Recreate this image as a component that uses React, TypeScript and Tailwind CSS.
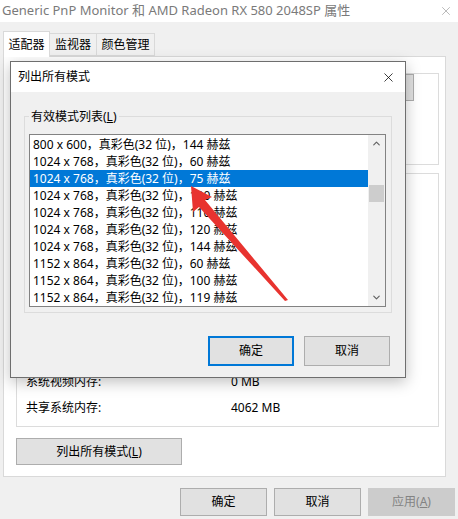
import { ChevronUp, ChevronDown, X } from "lucide-react";

const modes = [
  "800 x 600，真彩色(32 位)，144 赫兹",
  "1024 x 768，真彩色(32 位)，60 赫兹",
  "1024 x 768，真彩色(32 位)，75 赫兹",
  "1024 x 768，真彩色(32 位)，100 赫兹",
  "1024 x 768，真彩色(32 位)，110 赫兹",
  "1024 x 768，真彩色(32 位)，120 赫兹",
  "1024 x 768，真彩色(32 位)，144 赫兹",
  "1152 x 864，真彩色(32 位)，60 赫兹",
  "1152 x 864，真彩色(32 位)，100 赫兹",
  "1152 x 864，真彩色(32 位)，119 赫兹",
];

// only the rows that show below the dialog
const infoRows = [
  ["系统视频内存:", "0 MB"],
  ["共享系统内存:", "4062 MB"],
];

const ModeList = () => {
  return (
    <div className="flex h-[173px] w-[357px] border border-[#828282] bg-white">
      <div className="flex-1 pt-[1px]">
        {modes.map((m, i) => (
          <div
            key={i}
            className={
              i === 2
                ? "h-[17px] pl-[3px] leading-[17px] bg-[#0078d7] text-white"
                : "h-[17px] pl-[3px] leading-[17px] text-black"
            }
          >
            {m}
          </div>
        ))}
      </div>
      {/* scrollbar */}
      <div className="flex w-[17px] flex-col bg-[#f0f0f0]">
        <div className="flex h-[17px] items-center justify-center text-[#606060]">
          <ChevronUp size={11} strokeWidth={2.5} />
        </div>
        <div className="flex-1 pt-[33px]">
          <div className="mx-[1px] h-[17px] bg-[#cdcdcd]" />
        </div>
        <div className="flex h-[17px] items-center justify-center text-[#606060]">
          <ChevronDown size={11} strokeWidth={2.5} />
        </div>
      </div>
    </div>
  );
};

const ListModesDialog = () => {
  return (
    <div className="absolute left-[10px] top-[61px] flex h-[317px] w-[396px] flex-col border border-[#6e6e6e] bg-[#f0f0f0] shadow-[0_4px_14px_rgba(0,0,0,0.25)]">
      <div className="flex h-[30px] items-center justify-between bg-white pl-[7px] pr-[9px]">
        <span>列出所有模式</span>
        <X size={15} strokeWidth={1.2} className="text-black" />
      </div>
      <div className="flex flex-col px-[13px] pt-[16px]">
        <fieldset className="h-[205px] w-[368px] border border-[#dcdcdc] pl-[4px]">
          <legend className="px-[2px] leading-[17px]">
            有效模式列表(<span className="underline">L</span>)
          </legend>
          <div className="mt-[9px]">
            <ModeList />
          </div>
        </fieldset>
        <div className="mt-[23px] flex justify-end gap-[10px] pr-[2px]">
          <button className="h-[30px] w-[86px] border-2 border-[#0078d7] bg-[#e1e1e1]">确定</button>
          <button className="h-[30px] w-[86px] border border-[#adadad] bg-[#e1e1e1]">取消</button>
        </div>
      </div>
    </div>
  );
};

const Arrow = () => {
  return (
    <svg className="pointer-events-none absolute left-0 top-0" width="458" height="519">
      <polygon
        points="191,186 212,197 205,200 288,300 285,301 199,207 193,212"
        fill="#e8332f"
      />
    </svg>
  );
};

export default function App() {
  return (
    <div className="relative h-[519px] w-[458px] overflow-hidden bg-[#f0f0f0] font-['Noto_Sans','Noto_Sans_CJK_SC',sans-serif] text-[12px] text-black">
      {/* window title */}
      <div className="flex h-[22px] items-center justify-between bg-white pl-[2px] pr-[5px] text-[13px] text-[#7a7a7a]">
        <span>Generic PnP Monitor 和 AMD Radeon RX 580 2048SP 属性</span>
        <X size={14} strokeWidth={1} className="text-[#888]" />
      </div>

      {/* tabs */}
      <div className="flex h-[34px] items-end px-[3px] pt-[8px]">
        <div className="relative z-10 -mb-[1px] flex h-[26px] w-[47px] items-center justify-center border border-b-0 border-[#d9d9d9] bg-white">
          适配器
        </div>
        <div className="flex h-[23px] w-[47px] items-center justify-center border border-l-0 border-[#d9d9d9] bg-[#f0f0f0]">
          监视器
        </div>
        <div className="flex h-[23px] w-[58px] items-center justify-center border border-l-0 border-[#d9d9d9] bg-[#f0f0f0]">
          颜色管理
        </div>
      </div>

      {/* tab panel */}
      <div className="mx-[3px] flex h-[421px] w-[443px] flex-col border border-[#d9d9d9] bg-white px-[12px] pt-[16px]">
        <fieldset className="flex h-[92px] w-[423px] items-center justify-end border border-[#dcdcdc] pr-[24px]">
          <div className="h-[27px] w-[80px] border border-[#adadad] bg-[#e1e1e1]" />
        </fieldset>
        <div className="mt-[8px] flex h-[254px] w-[423px] flex-col justify-end border border-[#dcdcdc] pb-[5px]">
          {infoRows.map(([k, v]) => (
            <div key={k} className="flex h-[26px] items-center pl-[9px]">
              <span className="w-[205px]">{k}</span>
              <span>{v}</span>
            </div>
          ))}
        </div>
        <button className="mt-[11px] h-[27px] w-[166px] border border-[#adadad] bg-[#e1e1e1]">
          列出所有模式(<span className="underline">L</span>)
        </button>
      </div>

      {/* bottom buttons */}
      <div className="flex justify-end gap-[7px] pr-[3px] pt-[11px]">
        <button className="h-[28px] w-[87px] border border-[#adadad] bg-[#e1e1e1]">确定</button>
        <button className="h-[28px] w-[87px] border border-[#adadad] bg-[#e1e1e1]">取消</button>
        <button className="h-[28px] w-[87px] border border-[#cccccc] bg-[#cccccc] text-[#838383]">
          应用(<span className="underline">A</span>)
        </button>
      </div>

      <ListModesDialog />
      <Arrow />
    </div>
  );
}
